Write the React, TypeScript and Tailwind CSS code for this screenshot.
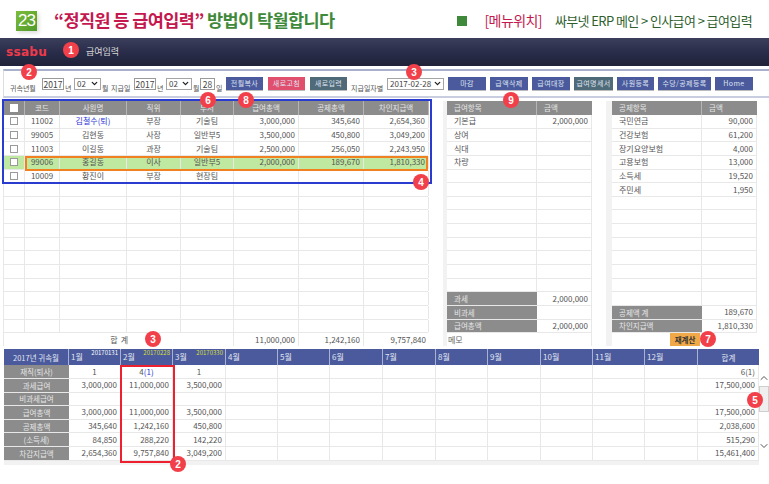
import React from "react";
import { ChevronDown, ChevronUp } from "lucide-react";

const FONT = '"Liberation Sans","Noto Sans CJK KR",sans-serif';
const KR = '"Noto Sans CJK KR","Liberation Sans",sans-serif';

function Badge({ n, x, y }: { n: number; x: number; y: number }) {
  return (
    <div
      className="absolute w-[16px] h-[16px] rounded-full bg-[#f2404a] text-white text-[10px] font-bold flex items-center justify-center z-20"
      style={{ left: x - 8, top: y - 8 }}
    >
      {n}
    </div>
  );
}

function Input({ w, v }: { w: string; v: string }) {
  return <div className={`${w} h-[12px] border border-[#9a9a9a] bg-white text-[8.5px] leading-[10px] text-center text-[#444]`}>{v}</div>;
}

function Sel({ w, v }: { w: string; v: string }) {
  return (
    <div className={`${w} h-[12px] border border-[#a5a5a5] bg-white text-[8px] leading-[10px] text-[#444] flex items-center justify-between pl-[2px] pr-[1px] whitespace-nowrap`}>
      <span>{v}</span>
      <ChevronDown size={9} strokeWidth={3.5} className="text-[#222] shrink-0" />
    </div>
  );
}

function Btn({ w, c, children }: { w: string; c: string; children: React.ReactNode }) {
  return (
    <div className={`${w} ${c} h-[13px] flex items-center justify-center text-[7px] text-[#dfe4f2] tracking-[0.4px] shadow-[0_1px_0_#bbb] whitespace-nowrap`}>
      {children}
    </div>
  );
}

const L = ({ children }: { children: React.ReactNode }) => <span className="text-[7px] text-[#555] whitespace-nowrap">{children}</span>;

const COLS = "grid grid-cols-[21px_35px_67px_54px_53px_65px_65px_65px]";
const mainRows = [
  ["11002", "김철수(퇴)", "부장", "기술팀", "3,000,000", "345,640", "2,654,360"],
  ["99005", "김현동", "사장", "일반부5", "3,500,000", "450,800", "3,049,200"],
  ["11003", "이길동", "과장", "기술팀", "2,500,000", "256,050", "2,243,950"],
  ["99006", "홍길동", "이사", "일반부5", "2,000,000", "189,670", "1,810,330"],
  ["10009", "황진이", "부장", "현장팀", "", "", ""],
  ...Array.from({ length: 11 }, () => ["", "", "", "", "", "", ""]),
];

function Check({ white }: { white?: boolean }) {
  return <div className={`w-[8px] h-[8px] border ${white ? "border-white bg-white" : "border-[#9a9a9a] bg-white"}`} />;
}

function MainTable() {
  const head = ["코드", "사원명", "직위", "부서", "급여총액", "공제총액", "차인지급액"];
  return (
    <div className="w-[425px] border-l border-[#e8e8e8]">
      <div className={`${COLS} h-[14px] bg-[#8c8c8c]`}>
        <div className="flex items-center justify-center border-r border-[#b5b5b5]"><Check white /></div>
        {head.map((h) => (
          <div key={h} className="flex items-center justify-center text-[7.5px] text-[#e6e6e6] border-r border-[#b5b5b5]">{h}</div>
        ))}
      </div>
      {mainRows.map((r, i) => (
        <div key={i} className={`${COLS} h-[13.65px] border-b border-[#e8e8e8] text-[8px] text-[#555] ${i === 3 ? "bg-[#bfe8a0]" : ""}`}>
          <div className="flex items-center justify-center border-r border-[#e8e8e8]">{i < 5 && <Check />}</div>
          {r.map((c, j) => (
            <div
              key={j}
              className={`flex items-center border-r border-[#e8e8e8] ${j >= 4 ? "justify-end pr-[3px]" : "justify-center"} ${i === 0 && j === 1 ? "text-[#2a35d8]" : ""}`}
            >
              {c}
            </div>
          ))}
        </div>
      ))}
      <div className="grid grid-cols-[230px_65px_65px_65px] h-[13px] text-[8px] text-[#555]">
        <div className="flex items-center justify-end pr-[102px] tracking-[3px] border-r border-[#e8e8e8]">합계</div>
        <div className="flex items-center justify-end pr-[3px] border-r border-[#e8e8e8]">11,000,000</div>
        <div className="flex items-center justify-end pr-[3px] border-r border-[#e8e8e8]">1,242,160</div>
        <div className="flex items-center justify-end pr-[3px]">9,757,840</div>
      </div>
    </div>
  );
}

function Panel({ head, rows, foot, last }: { head: string[]; rows: string[][]; foot: string[][]; last: React.ReactNode }) {
  const grid = "grid grid-cols-[90px_55px]";
  const blank = 14 - rows.length - foot.length + 2;
  const all = [...rows, ...Array.from({ length: blank }, () => ["", ""])];
  return (
    <div className="w-[145px]">
      <div className={`${grid} h-[14px] bg-[#8c8c8c] text-[7.5px] text-[#e6e6e6]`}>
        <div className="flex items-center pl-[7px] border-r border-[#b5b5b5]">{head[0]}</div>
        <div className="flex items-center pl-[7px]">{head[1]}</div>
      </div>
      {all.map((r, i) => (
        <div key={i} className={`${grid} h-[13.65px] border-b border-[#e8e8e8] text-[8px] text-[#555]`}>
          <div className="flex items-center pl-[7px] border-r border-[#e8e8e8]">{r[0]}</div>
          <div className="flex items-center justify-end pr-[3px] border-r border-[#e8e8e8]">{r[1]}</div>
        </div>
      ))}
      {foot.map((r, i) => (
        <div key={i} className={`${grid} h-[13.65px] border-b border-[#e8e8e8] text-[8px] text-[#555]`}>
          <div className={`flex items-center pl-[7px] text-[7.5px] ${r[0] ? "bg-[#8c8c8c] text-[#e6e6e6]" : "border-r border-[#e8e8e8]"}`}>{r[0]}</div>
          <div className="flex items-center justify-end pr-[3px] border-r border-[#e8e8e8]">{r[1]}</div>
        </div>
      ))}
      {last}
    </div>
  );
}

const BCOLS = "grid grid-cols-[65px_52px_52px_53px_52px_52px_53px_53px_52px_53px_52px_52px_53px_61px]";
const months = ["1월", "2월", "3월", "4월", "5월", "6월", "7월", "8월", "9월", "10월", "11월", "12월"];
const dates: Record<number, string> = { 0: "20170131", 1: "20170228", 2: "20170330" };
const bottomRows: [string, string, string, string, string][] = [
  ["재직(퇴사)", "1", "4", "1", "6(1)"],
  ["과세급여", "3,000,000", "11,000,000", "3,500,000", "17,500,000"],
  ["비과세급여", "", "", "", ""],
  ["급여총액", "3,000,000", "11,000,000", "3,500,000", "17,500,000"],
  ["공제총액", "345,640", "1,242,160", "450,800", "2,038,600"],
  ["(소득세)", "84,850", "288,220", "142,220", "515,290"],
  ["차감지급액", "2,654,360", "9,757,840", "3,049,200", "15,461,400"],
];

function BottomTable() {
  return (
    <div className="w-[755px] border-b-[4px] border-[#f2f2f2]">
      <div className={`${BCOLS} h-[16px] bg-[#4a5a9c] text-[8px] text-[#e0e5f2]`}>
        <div className="flex items-center justify-center text-[7.5px] border-r border-[#aab2d4]">2017년 귀속월</div>
        {months.map((m, i) => (
          <div key={m} className="relative flex items-center pl-[2px] border-r border-[#aab2d4]">
            {m}
            {dates[i] && (
              <span className={`absolute right-[2px] top-[0px] text-[6px] leading-[8px] ${i === 0 ? "text-white" : "text-[#d8df3c]"}`}>{dates[i]}</span>
            )}
          </div>
        ))}
        <div className="flex items-center justify-center text-[7.5px]">합계</div>
      </div>
      {bottomRows.map((r) => (
        <div key={r[0]} className={`${BCOLS} h-[13.65px] border-b border-[#e8e8e8] text-[8px] text-[#555]`}>
          <div className="flex items-center justify-center bg-[#8c8c8c] text-[#e6e6e6] text-[7.5px]">{r[0]}</div>
          {[r[1], r[2], r[3]].map((v, j) => (
            <div key={j} className={`flex items-center border-r border-[#e8e8e8] ${r[0] === "재직(퇴사)" ? "justify-center" : "justify-end pr-[3px]"}`}>
              {v}
              {r[0] === "재직(퇴사)" && j === 1 && <span className="text-[#2a35d8]">(1)</span>}
            </div>
          ))}
          {Array.from({ length: 9 }, (_, k) => (
            <div key={k} className="border-r border-[#e8e8e8]" />
          ))}
          <div className="flex items-center justify-end pr-[3px] border-r border-[#e8e8e8]">{r[4]}</div>
        </div>
      ))}
    </div>
  );
}

export default function App() {
  return (
    <div className="relative w-[769px] h-[484px] overflow-hidden bg-white" style={{ fontFamily: FONT }}>
      <div className="h-[38px] flex items-center pt-[3px]">
        <div className="ml-[16px] w-[21px] h-[20px] bg-gradient-to-br from-[#7dbd3c] to-[#4f9a2a] text-white text-[17px] leading-[20px] text-center tracking-[-1px] shadow-[2px_2px_4px_#ddd]">23</div>
        <div className="ml-[17px] text-[17.5px] font-bold tracking-[-0.6px]" style={{ fontFamily: KR }}>
          <span className="text-[#c4184e]">“정직원 등 급여입력”</span>
          <span className="text-[#3f8a3a]"> 방법이 탁월합니다</span>
        </div>
        <div className="ml-auto mr-[17px] flex items-center tracking-[-0.6px]" style={{ fontFamily: KR }}>
          <div className="w-[10px] h-[10px] bg-[#3f8a3a] mr-[17px]" />
          <span className="text-[#c4184e] mr-[13px] text-[14px]">[메뉴위치]</span>
          <span className="text-[#2f5f2f] text-[13px]">싸부넷 ERP 메인 &gt; 인사급여 &gt; 급여입력</span>
        </div>
      </div>

      <div className="h-[28px] bg-gradient-to-b from-[#3b3f5c] via-[#2a2d4a] to-[#1f2238] flex items-center">
        <span className="ml-[6px] text-[#ef3a4a] text-[12px] font-bold tracking-[0.3px]" style={{ fontFamily: '"DejaVu Sans",sans-serif' }}>ssabu</span>
        <span className="ml-[39px] text-[#d8d8d8] text-[9px]" style={{ fontFamily: KR }}>급여입력</span>
      </div>

      <div className="ml-[3px] mt-[3px] h-[29px] border-t-2 border-t-[#a9b0cc] border-b-2 border-b-[#c9cde0] border-l border-l-[#dddddd] flex items-center pl-[6px]" style={{ fontFamily: KR }}>
        <div className="w-[32px]"><L>귀속년월</L></div>
        <Input w="w-[22px]" v="2017" />
        <div className="w-[10px] pl-[1px]"><L>년</L></div>
        <Sel w="w-[27px]" v="02" />
        <div className="w-[10px] pl-[1px]"><L>월</L></div>
        <div className="w-[23px]"><L>지급일</L></div>
        <Input w="w-[22px]" v="2017" />
        <div className="w-[10px] pl-[1px]"><L>년</L></div>
        <Sel w="w-[26px]" v="02" />
        <div className="w-[8px] pl-[1px]"><L>월</L></div>
        <Input w="w-[15px]" v="28" />
        <div className="w-[11px] pl-[1px]"><L>일</L></div>
        <div className="flex gap-[5px]">
          <Btn w="w-[37px]" c="bg-[#4a5a9c]">전월복사</Btn>
          <Btn w="w-[37px]" c="bg-[#e0506e]">새로고침</Btn>
          <Btn w="w-[37px]" c="bg-[#4f6a78]">새로입력</Btn>
        </div>
        <div className="w-[36px] ml-[4px]"><L>지급일자별</L></div>
        <Sel w="w-[57px]" v="2017-02-28" />
        <div className="flex gap-[4px] ml-[4px]">
          <Btn w="w-[38px]" c="bg-[#4a5a9c]">마감</Btn>
          <Btn w="w-[38px]" c="bg-[#4a5a9c]">급액삭제</Btn>
          <Btn w="w-[38px]" c="bg-[#4a5a9c]">급여대장</Btn>
          <Btn w="w-[39px]" c="bg-[#4f6a78]">급여명세서</Btn>
          <Btn w="w-[37px]" c="bg-[#4a5a9c]">사원등록</Btn>
          <Btn w="w-[53px]" c="bg-[#4a5a9c]">수당/공제등록</Btn>
          <Btn w="w-[38px]" c="bg-[#4a5a9c]">Home</Btn>
        </div>
      </div>

      <div className="flex mt-[3px] ml-[3px]" style={{ fontFamily: KR }}>
        <MainTable />
        <div className="ml-[15px] border-l-[4px] border-[#f2f2f2]">
          <Panel
            head={["급여항목", "금액"]}
            rows={[["기본급", "2,000,000"], ["상여", ""], ["식대", ""], ["차량", ""]]}
            foot={[["과세", "2,000,000"], ["비과세", ""], ["급여총액", "2,000,000"]]}
            last={<div className="h-[13px] flex items-center pl-[1px] text-[8px] text-[#666] border-r border-[#e8e8e8]">메모</div>}
          />
        </div>
        <div className="ml-[14px] border-l-[6px] border-[#f2f2f2]">
          <Panel
            head={["공제항목", "금액"]}
            rows={[["국민연금", "90,000"], ["건강보험", "61,200"], ["장기요양보험", "4,000"], ["고용보험", "13,000"], ["소득세", "19,520"], ["주민세", "1,950"]]}
            foot={[["", ""], ["공제액 계", "189,670"], ["차인지급액", "1,810,330"]]}
            last={
              <div className="h-[13px] flex justify-end pr-[57px]">
                <div className="w-[30px] h-[13px] bg-[#f0a848] text-[#333] text-[7.5px] font-bold flex items-center justify-center">재계산</div>
              </div>
            }
          />
        </div>
      </div>

      <div className="mt-[3px] ml-[4px]" style={{ fontFamily: KR }}>
        <BottomTable />
      </div>

      {/* scroll arrows */}
      <ChevronUp size={12} strokeWidth={2} className="absolute left-[758px] top-[372px] text-[#555]" />
      <ChevronDown size={12} strokeWidth={2} className="absolute left-[758px] top-[440px] text-[#555]" />
      <div className="absolute left-[759px] top-[386px] w-[10px] h-[26px] bg-[#efefef] border border-[#cfcfcf]" />

      {/* highlight frames */}
      <div className="absolute left-[2px] top-[99px] w-[430px] h-[85px] border-2 border-[#2a3ccf] z-10" />
      <div className="absolute left-[25px] top-[156px] w-[403px] h-[15px] border-2 border-[#f08020] z-10" />
      <div className="absolute left-[120px] top-[365px] w-[55px] h-[98px] border-2 border-[#ee2030] z-10" />

      <Badge n={1} x={71} y={50} />
      <Badge n={2} x={29} y={72} />
      <Badge n={3} x={414} y={72} />
      <Badge n={6} x={208} y={100} />
      <Badge n={8} x={246} y={100} />
      <Badge n={9} x={511} y={100} />
      <Badge n={4} x={421} y={182} />
      <Badge n={7} x={708} y={339} />
      <Badge n={3} x={153} y={339} />
      <Badge n={2} x={178} y={464} />
      <Badge n={5} x={755} y={400} />
    </div>
  );
}
